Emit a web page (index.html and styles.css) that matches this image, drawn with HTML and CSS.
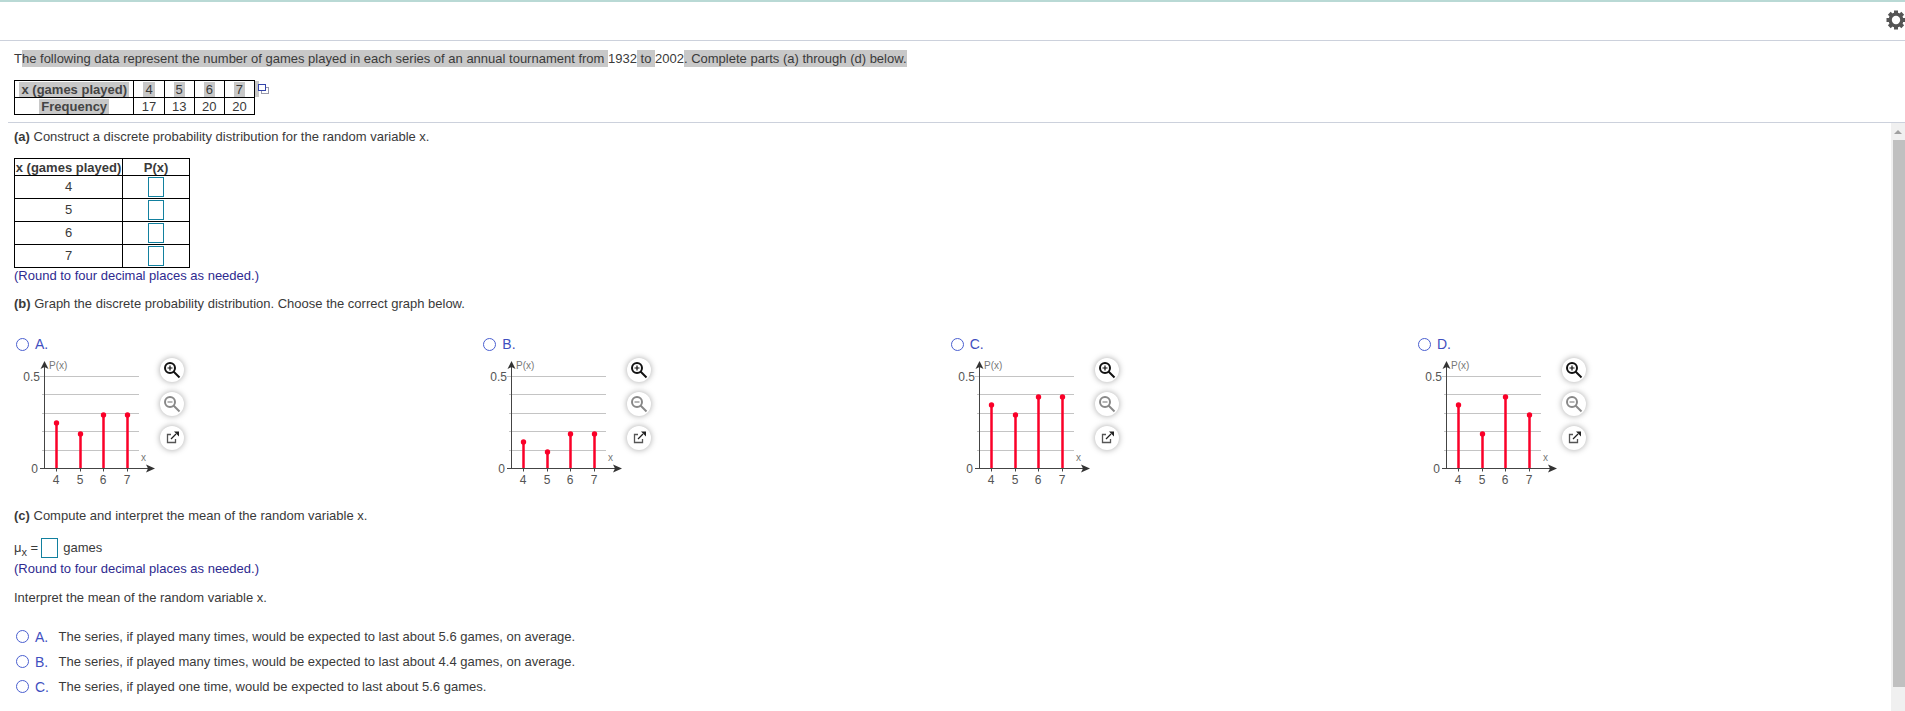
FILE: index.html

```html
<!DOCTYPE html>
<html lang="en">
<head>
    <meta charset="UTF-8">
    <title>Discrete probability distribution</title>
    <link rel="stylesheet" href="styles.css">
</head>
<body>
    <div class="top-strip"></div>
    <div class="toolbar">
        <svg class="gear" viewBox="0 0 20 20" width="20" height="20">
            <circle cx="10" cy="10" r="7.500"/>
            <rect x="8" y="0.500" width="4" height="19"/>
            <rect x="8" y="0.500" width="4" height="19" transform="rotate(45 10 10)"/>
            <rect x="8" y="0.500" width="4" height="19" transform="rotate(90 10 10)"/>
            <rect x="8" y="0.500" width="4" height="19" transform="rotate(135 10 10)"/>
            <circle class="gear-hole" cx="10" cy="10" r="4.200"/>
        </svg>
    </div>

    <div class="stem">
        <p>T<span class="hl">he following data represent the number of games played in each series of an annual tournament from </span>1932<span class="hl"> to </span>2002<span class="hl">. Complete parts (a) through (d) below. </span></p>
        <div class="data-row">
            <table class="data-table">
                <tr>
                    <th><span class="hl">x (games played)</span></th>
                    <td><span class="hl">4</span></td>
                    <td><span class="hl">5</span></td>
                    <td><span class="hl">6</span></td>
                    <td><span class="hl">7</span></td>
                </tr>
                <tr>
                    <th><span class="hl">Frequency</span></th>
                    <td>17</td>
                    <td>13</td>
                    <td>20</td>
                    <td>20</td>
                </tr>
            </table>
            <span class="copy-mark"><svg viewBox="0 0 12 10" width="12" height="10">
                <rect class="copy-back" x="3.500" y="3.500" width="7" height="6"/>
                <rect class="copy-front" x="0.500" y="0.500" width="7" height="6"/>
            </svg></span>
        </div>
    </div>

    <div class="work">
        <div class="work-body">
            <p class="part-a"><b>(a)</b> Construct a discrete probability distribution for the random variable x.</p>

            <table class="answer-table">
                <tr><th>x (games played)</th><th>P(x)</th></tr>
                <tr><td>4</td><td><span class="answer-box"></span></td></tr>
                <tr><td>5</td><td><span class="answer-box"></span></td></tr>
                <tr><td>6</td><td><span class="answer-box"></span></td></tr>
                <tr><td>7</td><td><span class="answer-box"></span></td></tr>
            </table>
            <p class="hint">(Round to four decimal places as needed.)</p>

            <p class="part-b"><b>(b)</b> Graph the discrete probability distribution. Choose the correct graph below.</p>

            <div class="graphs">
                <div class="graph-choice">
                    <div class="choice-label"><span class="radio"></span><span class="letter">A.</span></div>
                    <div class="graph-row">
                        <svg class="chart" viewBox="0 0 144 134" width="144" height="134">
                            <g class="grid">
                                <path d="M24 21.500H123M26 39.500H123M26 58.500H123M26 76.500H123M26 95.500H123"/>
                            </g>
                            <path class="axis" d="M28.500 10V113.500M24 113.500H135M40.500 113.500v3M64.500 113.500v3M87.500 113.500v3M111.500 113.500v3"/>
                            <path class="arrow" d="M28.500 6l4 8-4-2-4 2zM139 113.500l-9 4 2-4-2-4z"/>
                            <text class="small" x="33" y="14">P(x)</text>
                            <text class="small" x="125" y="106">x</text>
                            <text class="tick" x="24" y="25.500" text-anchor="end">0.5</text>
                            <text class="tick" x="22" y="117.500" text-anchor="end">0</text>
                            <text class="tick" x="40" y="128.500" text-anchor="middle">4</text>
                            <text class="tick" x="64" y="128.500" text-anchor="middle">5</text>
                            <text class="tick" x="87" y="128.500" text-anchor="middle">6</text>
                            <text class="tick" x="111" y="128.500" text-anchor="middle">7</text>
                            <path class="stick" d="M40.500 113V68M64.500 113V79M87.500 113V60M111.500 113V60"/>
                            <circle class="dot" cx="40.500" cy="68" r="2.700"/>
                            <circle class="dot" cx="64.500" cy="79" r="2.700"/>
                            <circle class="dot" cx="87.500" cy="60" r="2.700"/>
                            <circle class="dot" cx="111.500" cy="60" r="2.700"/>
                        </svg>
                        <div class="graph-tools">
                            <span class="tool"><svg viewBox="0 0 18 18" width="18" height="18"><circle class="lens" cx="7" cy="7" r="5"/><path class="lens-bar" d="M4.500 7h5M7 4.500v5"/><path class="lens" d="M10.500 10.500l6 6"/></svg></span>
                            <span class="tool tool-off"><svg viewBox="0 0 18 18" width="18" height="18"><circle class="lens" cx="7" cy="7" r="5"/><path class="lens-bar" d="M4.500 7h5"/><path class="lens" d="M10.500 10.500l6 6"/></svg></span>
                            <span class="tool"><svg viewBox="0 0 16 16" width="16" height="16"><path class="popout" d="M7 4.500H3.500v8h8V9"/><path class="popout-line" d="M7 9l5-5"/><path class="popout-head" d="M10 1.500h5v5z"/></svg></span>
                        </div>
                    </div>
                </div>

                <div class="graph-choice">
                    <div class="choice-label"><span class="radio"></span><span class="letter">B.</span></div>
                    <div class="graph-row">
                        <svg class="chart" viewBox="0 0 144 134" width="144" height="134">
                            <g class="grid">
                                <path d="M24 21.500H123M26 39.500H123M26 58.500H123M26 76.500H123M26 95.500H123"/>
                            </g>
                            <path class="axis" d="M28.500 10V113.500M24 113.500H135M40.500 113.500v3M64.500 113.500v3M87.500 113.500v3M111.500 113.500v3"/>
                            <path class="arrow" d="M28.500 6l4 8-4-2-4 2zM139 113.500l-9 4 2-4-2-4z"/>
                            <text class="small" x="33" y="14">P(x)</text>
                            <text class="small" x="125" y="106">x</text>
                            <text class="tick" x="24" y="25.500" text-anchor="end">0.5</text>
                            <text class="tick" x="22" y="117.500" text-anchor="end">0</text>
                            <text class="tick" x="40" y="128.500" text-anchor="middle">4</text>
                            <text class="tick" x="64" y="128.500" text-anchor="middle">5</text>
                            <text class="tick" x="87" y="128.500" text-anchor="middle">6</text>
                            <text class="tick" x="111" y="128.500" text-anchor="middle">7</text>
                            <path class="stick" d="M40.500 113V87M64.500 113V97M87.500 113V79M111.500 113V79"/>
                            <circle class="dot" cx="40.500" cy="87" r="2.700"/>
                            <circle class="dot" cx="64.500" cy="97" r="2.700"/>
                            <circle class="dot" cx="87.500" cy="79" r="2.700"/>
                            <circle class="dot" cx="111.500" cy="79" r="2.700"/>
                        </svg>
                        <div class="graph-tools">
                            <span class="tool"><svg viewBox="0 0 18 18" width="18" height="18"><circle class="lens" cx="7" cy="7" r="5"/><path class="lens-bar" d="M4.500 7h5M7 4.500v5"/><path class="lens" d="M10.500 10.500l6 6"/></svg></span>
                            <span class="tool tool-off"><svg viewBox="0 0 18 18" width="18" height="18"><circle class="lens" cx="7" cy="7" r="5"/><path class="lens-bar" d="M4.500 7h5"/><path class="lens" d="M10.500 10.500l6 6"/></svg></span>
                            <span class="tool"><svg viewBox="0 0 16 16" width="16" height="16"><path class="popout" d="M7 4.500H3.500v8h8V9"/><path class="popout-line" d="M7 9l5-5"/><path class="popout-head" d="M10 1.500h5v5z"/></svg></span>
                        </div>
                    </div>
                </div>

                <div class="graph-choice">
                    <div class="choice-label"><span class="radio"></span><span class="letter">C.</span></div>
                    <div class="graph-row">
                        <svg class="chart" viewBox="0 0 144 134" width="144" height="134">
                            <g class="grid">
                                <path d="M24 21.500H123M26 39.500H123M26 58.500H123M26 76.500H123M26 95.500H123"/>
                            </g>
                            <path class="axis" d="M28.500 10V113.500M24 113.500H135M40.500 113.500v3M64.500 113.500v3M87.500 113.500v3M111.500 113.500v3"/>
                            <path class="arrow" d="M28.500 6l4 8-4-2-4 2zM139 113.500l-9 4 2-4-2-4z"/>
                            <text class="small" x="33" y="14">P(x)</text>
                            <text class="small" x="125" y="106">x</text>
                            <text class="tick" x="24" y="25.500" text-anchor="end">0.5</text>
                            <text class="tick" x="22" y="117.500" text-anchor="end">0</text>
                            <text class="tick" x="40" y="128.500" text-anchor="middle">4</text>
                            <text class="tick" x="64" y="128.500" text-anchor="middle">5</text>
                            <text class="tick" x="87" y="128.500" text-anchor="middle">6</text>
                            <text class="tick" x="111" y="128.500" text-anchor="middle">7</text>
                            <path class="stick" d="M40.500 113V50M64.500 113V60M87.500 113V42M111.500 113V42"/>
                            <circle class="dot" cx="40.500" cy="50" r="2.700"/>
                            <circle class="dot" cx="64.500" cy="60" r="2.700"/>
                            <circle class="dot" cx="87.500" cy="42" r="2.700"/>
                            <circle class="dot" cx="111.500" cy="42" r="2.700"/>
                        </svg>
                        <div class="graph-tools">
                            <span class="tool"><svg viewBox="0 0 18 18" width="18" height="18"><circle class="lens" cx="7" cy="7" r="5"/><path class="lens-bar" d="M4.500 7h5M7 4.500v5"/><path class="lens" d="M10.500 10.500l6 6"/></svg></span>
                            <span class="tool tool-off"><svg viewBox="0 0 18 18" width="18" height="18"><circle class="lens" cx="7" cy="7" r="5"/><path class="lens-bar" d="M4.500 7h5"/><path class="lens" d="M10.500 10.500l6 6"/></svg></span>
                            <span class="tool"><svg viewBox="0 0 16 16" width="16" height="16"><path class="popout" d="M7 4.500H3.500v8h8V9"/><path class="popout-line" d="M7 9l5-5"/><path class="popout-head" d="M10 1.500h5v5z"/></svg></span>
                        </div>
                    </div>
                </div>

                <div class="graph-choice">
                    <div class="choice-label"><span class="radio"></span><span class="letter">D.</span></div>
                    <div class="graph-row">
                        <svg class="chart" viewBox="0 0 144 134" width="144" height="134">
                            <g class="grid">
                                <path d="M24 21.500H123M26 39.500H123M26 58.500H123M26 76.500H123M26 95.500H123"/>
                            </g>
                            <path class="axis" d="M28.500 10V113.500M24 113.500H135M40.500 113.500v3M64.500 113.500v3M87.500 113.500v3M111.500 113.500v3"/>
                            <path class="arrow" d="M28.500 6l4 8-4-2-4 2zM139 113.500l-9 4 2-4-2-4z"/>
                            <text class="small" x="33" y="14">P(x)</text>
                            <text class="small" x="125" y="106">x</text>
                            <text class="tick" x="24" y="25.500" text-anchor="end">0.5</text>
                            <text class="tick" x="22" y="117.500" text-anchor="end">0</text>
                            <text class="tick" x="40" y="128.500" text-anchor="middle">4</text>
                            <text class="tick" x="64" y="128.500" text-anchor="middle">5</text>
                            <text class="tick" x="87" y="128.500" text-anchor="middle">6</text>
                            <text class="tick" x="111" y="128.500" text-anchor="middle">7</text>
                            <path class="stick" d="M40.500 113V50M64.500 113V79M87.500 113V42M111.500 113V60"/>
                            <circle class="dot" cx="40.500" cy="50" r="2.700"/>
                            <circle class="dot" cx="64.500" cy="79" r="2.700"/>
                            <circle class="dot" cx="87.500" cy="42" r="2.700"/>
                            <circle class="dot" cx="111.500" cy="60" r="2.700"/>
                        </svg>
                        <div class="graph-tools">
                            <span class="tool"><svg viewBox="0 0 18 18" width="18" height="18"><circle class="lens" cx="7" cy="7" r="5"/><path class="lens-bar" d="M4.500 7h5M7 4.500v5"/><path class="lens" d="M10.500 10.500l6 6"/></svg></span>
                            <span class="tool tool-off"><svg viewBox="0 0 18 18" width="18" height="18"><circle class="lens" cx="7" cy="7" r="5"/><path class="lens-bar" d="M4.500 7h5"/><path class="lens" d="M10.500 10.500l6 6"/></svg></span>
                            <span class="tool"><svg viewBox="0 0 16 16" width="16" height="16"><path class="popout" d="M7 4.500H3.500v8h8V9"/><path class="popout-line" d="M7 9l5-5"/><path class="popout-head" d="M10 1.500h5v5z"/></svg></span>
                        </div>
                    </div>
                </div>
            </div>

            <p class="part-c"><b>(c)</b> Compute and interpret the mean of the random variable x.</p>

            <div class="mean-row">
                <span class="mean-sym">&mu;<sub>x</sub> =</span>
                <span class="answer-box"></span>
                <span>games</span>
            </div>
            <p class="hint hint-mean">(Round to four decimal places as needed.)</p>

            <p class="interpret">Interpret the mean of the random variable x.</p>

            <div class="options">
                <div class="option"><span class="radio"></span><span class="letter">A.</span><span>The series, if played many times, would be expected to last about 5.6 games, on average.</span></div>
                <div class="option"><span class="radio"></span><span class="letter">B.</span><span>The series, if played many times, would be expected to last about 4.4 games, on average.</span></div>
                <div class="option"><span class="radio"></span><span class="letter">C.</span><span>The series, if played one time, would be expected to last about 5.6 games.</span></div>
            </div>
        </div>

        <div class="scrollbar">
            <div class="scroll-up"></div>
            <div class="scroll-thumb"></div>
        </div>
    </div>
</body>
</html>
```

FILE: styles.css

```css
* {
    box-sizing: border-box;
    margin: 0;
    padding: 0;
}

html, body {
    height: 711px;
    overflow: hidden;
}

body {
    background: white;
    color: #3a3a3a;
    font-family: "Liberation Sans", Arial, sans-serif;
    font-size: 13px;
    line-height: 16px;
}

.top-strip {
    height: 2px;
    background: #b9d9d5;
}

.toolbar {
    height: 39px;
    display: flex;
    justify-content: flex-end;
    align-items: center;
    padding: 0 0 2px 0;
    border-bottom: 1px solid #ccd1dc;
}

.gear {
    fill: #555;
    margin-right: -1px;
}

.gear-hole {
    fill: white;
}

.stem {
    padding: 10px 0 0 14px;
}

.hl {
    background: #c8c8c8;
    padding: 1px 0;
}

.data-row {
    display: flex;
    align-items: flex-start;
    margin-top: 13px;
    height: 42px;
}

.data-table {
    border-collapse: collapse;
    table-layout: fixed;
    width: 241px;
    height: 34px;
    text-align: center;
}

.data-table th,
.data-table td {
    border: 1px solid black;
    height: 17px;
    padding: 0;
    line-height: 15px;
}

.data-table th {
    width: 119px;
    color: #444;
}

.data-table td {
    width: 30px;
}

.data-table .hl {
    padding: 0 2px;
}

.copy-mark {
    display: block;
    height: 16px;
    margin-top: 1px;
    padding: 3px 0 0 3px;
    background: linear-gradient(to right, #c8c8c8 4px, transparent 4px);
}

.copy-mark svg {
    display: block;
}

.copy-back {
    fill: white;
    stroke: #99a;
}

.copy-front {
    fill: white;
    stroke: #3344aa;
}

.work {
    display: flex;
    height: 589px;
    margin-left: 8px;
    border-top: 1px solid #ccd1dc;
}

.work-body {
    flex: 1;
    padding: 6px 0 0 6px;
    overflow: hidden;
}

.answer-table {
    border-collapse: collapse;
    table-layout: fixed;
    width: 176px;
    margin-top: 13px;
    text-align: center;
}

.answer-table th,
.answer-table td {
    border: 1px solid black;
    padding: 0;
}

.answer-table th {
    height: 17px;
    line-height: 15px;
}

.answer-table th:first-child {
    width: 108px;
}

.answer-table td {
    height: 23px;
}

.answer-box {
    display: inline-block;
    width: 16px;
    height: 20px;
    border: 1.5px solid #12809f;
    vertical-align: middle;
}

.hint {
    color: #2e2a8f;
}

.part-b {
    margin-top: 12px;
}

.graphs {
    display: grid;
    grid-template-columns: repeat(4, 467.33px);
    margin: 24px 0 0 2px;
}

.choice-label {
    display: flex;
    align-items: center;
    gap: 6px;
    height: 16px;
}

.radio {
    display: block;
    flex: none;
    width: 13px;
    height: 13px;
    border: 1.5px solid #4a5fd0;
    border-radius: 50%;
}

.letter {
    color: #3f4fc0;
    font-size: 14px;
}

.graph-row {
    display: flex;
    margin-top: 3px;
}

.chart {
    display: block;
    flex: none;
}

.grid path {
    fill: none;
    stroke: #c4c4c4;
}

.axis {
    fill: none;
    stroke: #444;
}

.arrow {
    fill: #333;
}

.small {
    font-size: 10px;
    fill: #777;
}

.tick {
    font-size: 12px;
    fill: #555;
}

.stick {
    fill: none;
    stroke: #fa0028;
    stroke-width: 2.500;
}

.dot {
    fill: #fa0028;
}

.graph-tools {
    display: flex;
    flex-direction: column;
    gap: 10px;
    padding-top: 2.500px;
}

.tool {
    display: flex;
    justify-content: center;
    align-items: center;
    width: 24px;
    height: 24px;
    background: white;
    border-radius: 50%;
    box-shadow: 0 0 6px rgba(0,0,0,0.35);
}

.lens {
    fill: none;
    stroke: #111;
    stroke-width: 2;
}

.lens-bar {
    fill: none;
    stroke: #111;
    stroke-width: 1.200;
}

.tool-off .lens,
.tool-off .lens-bar {
    stroke: #888;
}

.popout {
    fill: none;
    stroke: #555;
    stroke-width: 1.300;
}

.popout-line {
    fill: none;
    stroke: #222;
    stroke-width: 1.300;
}

.popout-head {
    fill: #222;
}

.part-c {
    margin-top: 19px;
}

.mean-row {
    display: flex;
    align-items: center;
    gap: 3px;
    height: 20px;
    margin-top: 14px;
}

.mean-row .answer-box {
    width: 17px;
    margin-right: 2px;
}

.mean-sym sub {
    font-size: 11px;
    line-height: 0;
}

.hint-mean {
    margin-top: 3px;
}

.interpret {
    margin-top: 13px;
}

.options {
    margin: 18px 0 0 2px;
}

.option {
    display: flex;
    align-items: center;
    height: 25px;
}

.option .letter {
    width: 23.500px;
    margin-left: 6px;
}

.scrollbar {
    flex: none;
    width: 14px;
    background: #f0f0f0;
    padding-left: 2px;
}

.scroll-up {
    height: 17px;
    padding-top: 7px;
}

.scroll-up::before {
    content: "";
    display: block;
    width: 0;
    margin-left: 1px;
    border-left: 4px solid transparent;
    border-right: 4px solid transparent;
    border-bottom: 4px solid #a0a0a0;
}

.scroll-thumb {
    height: 547px;
    background: #c0c0c0;
}
```
